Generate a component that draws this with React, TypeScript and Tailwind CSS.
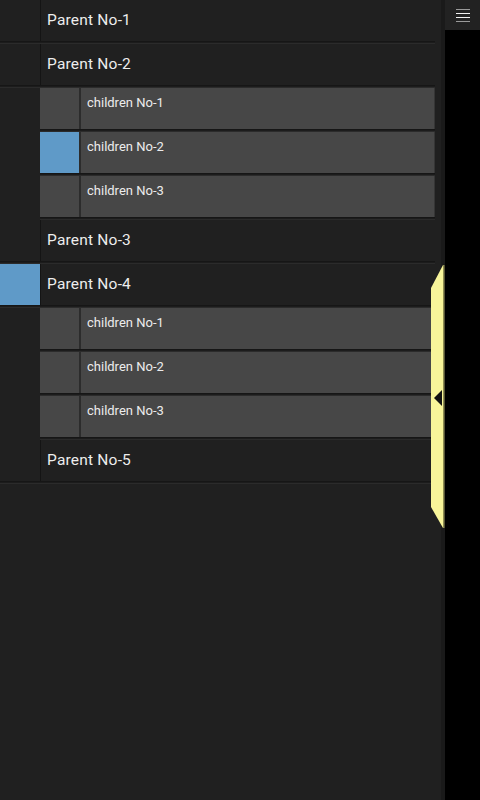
import React from 'react';

type Child = { label: string; selected?: boolean };
type Parent = { label: string; selected?: boolean; children?: Child[] };

const data: Parent[] = [
  { label: 'Parent No-1' },
  {
    label: 'Parent No-2',
    children: [
      { label: 'children No-1' },
      { label: 'children No-2', selected: true },
      { label: 'children No-3' },
    ],
  },
  { label: 'Parent No-3' },
  {
    label: 'Parent No-4',
    selected: true,
    children: [{ label: 'children No-1' }, { label: 'children No-2' }, { label: 'children No-3' }],
  },
  { label: 'Parent No-5' },
];

function Separator({ inset }: { inset?: boolean }) {
  return (
    <div className={inset ? 'ml-[40px] flex flex-col' : 'flex flex-col'}>
      <div className="h-px bg-[#161616]" />
      <div className="h-px bg-[#1c1c1c]" />
      <div className="h-px bg-[#2b2b2b]" />
    </div>
  );
}

function ParentRow({ item }: { item: Parent }) {
  return (
    <>
      <div className="flex h-[41px]">
        <div className={item.selected ? 'w-[40px] bg-[#5f9ac8]' : 'w-[40px]'} />
        <div className="w-px bg-[#141414]" />
        <div className="flex items-center pl-[6px] text-[15.5px] tracking-[0.2px] text-[#ededed]">{item.label}</div>
      </div>
      <Separator />
    </>
  );
}

function ChildRow({ item }: { item: Child }) {
  return (
    <>
      <div className="ml-[40px] flex h-[41px] bg-[#474747]">
        <div className={item.selected ? 'w-[39px] bg-[#5f9ac8]' : 'w-[39px]'} />
        <div className="w-[2px] bg-[#2c2c2c]" />
        <div className="flex-1 pl-[6px] pt-[7px] text-[13px] leading-[16px] text-[#ececec]">{item.label}</div>
        <div className="w-px bg-[#363636]" />
      </div>
      <Separator inset />
    </>
  );
}

export default function App() {
  return (
    <div
      className="flex h-[800px] w-[480px] overflow-hidden bg-black"
      style={{ fontFamily: 'Roboto, "Noto Sans", sans-serif' }}
    >
      <div className="relative flex w-[441px] bg-[#202020]">
        <div className="flex w-[435px] flex-col">
          {data.map((p, i) => (
            <React.Fragment key={i}>
              <ParentRow item={p} />
              {p.children?.map((c, j) => <ChildRow key={j} item={c} />)}
            </React.Fragment>
          ))}
        </div>
        {/* drawer handle */}
        <svg className="absolute left-[431px] top-[265px]" width="14" height="264" viewBox="0 0 14 264">
          <polygon points="12,0 12,263 0,242 0,23" fill="#f8f59a" />
          <rect x="12" y="0" width="1.5" height="263" fill="#8f8d52" />
          <polygon points="3,133 11,125 11,141" fill="#111" />
        </svg>
      </div>
      <div className="w-[4px] bg-[#1a1a1a]" />
      <div className="flex w-[35px] flex-col">
        <div className="flex h-[30px] flex-col items-center justify-center gap-[3px] bg-[#222]">
          <div className="h-px w-[14px] bg-[#9a9a9a]" />
          <div className="h-px w-[14px] bg-[#f0f0f0]" />
          <div className="h-px w-[14px] bg-[#f0f0f0]" />
          <div className="h-px w-[14px] bg-[#9a9a9a]" />
        </div>
      </div>
    </div>
  );
}
